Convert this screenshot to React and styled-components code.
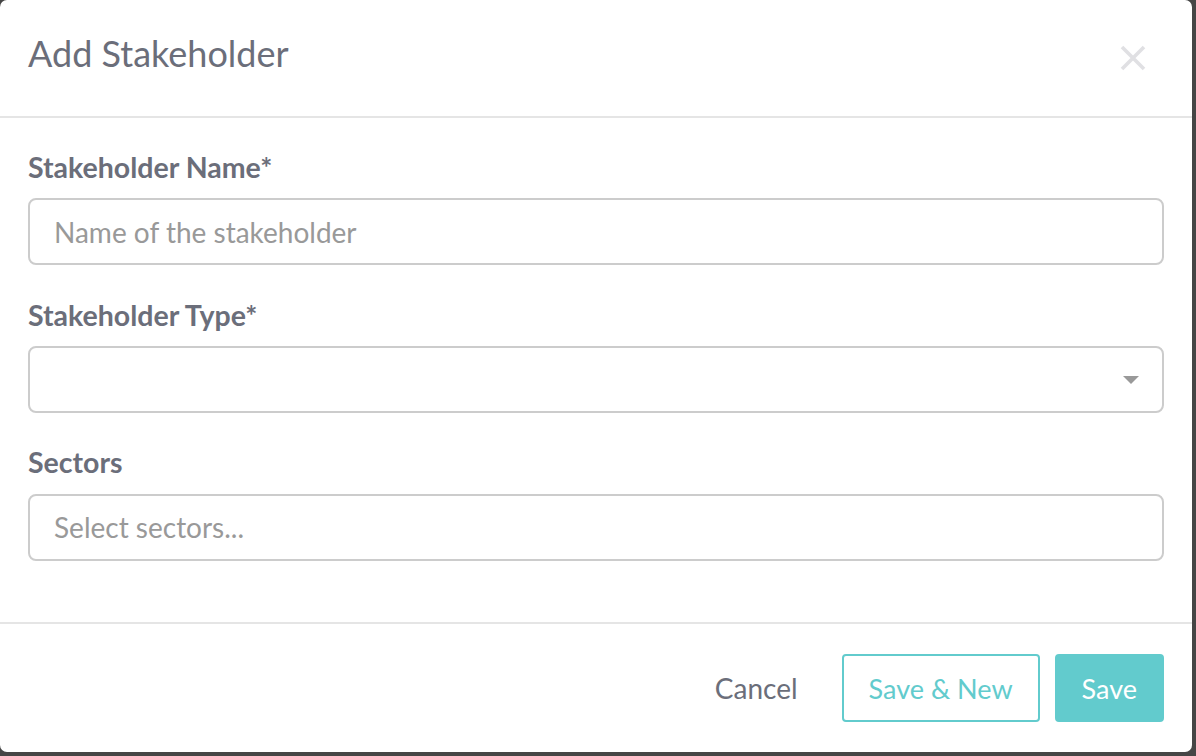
import React from "react";
import styled, { createGlobalStyle } from "styled-components";

const GlobalStyle = createGlobalStyle`
  * {
    box-sizing: border-box;
  }
  body {
    margin: 0;
    font-family: Lato, "Open Sans", sans-serif;
    background-color: #454545;
  }
`;

const Backdrop = styled.div`
  width: 100%;
  height: 100vh;
  background-color: #454545;
`;

const Modal = styled.div`
  width: 1192px;
  height: 752px;
  background-color: #fff;
  border-radius: 7px;
  display: flex;
  flex-direction: column;
`;

const Header = styled.div`
  display: flex;
  flex-shrink: 0;
  justify-content: space-between;
  align-items: flex-start;
  height: 118px;
  padding: 32px 46px 0 28px;
  border-bottom: 2px solid #e5e5e5;
`;

const Title = styled.h4`
  margin: 0;
  font-size: 36px;
  font-weight: 400;
  line-height: 1.2;
  color: #6b6e7a;
`;

const CloseButton = styled.button`
  border: none;
  background: none;
  padding: 0;
  margin-top: 13px;
  cursor: pointer;
  display: flex;
`;

const Body = styled.div`
  padding: 32px 28px 0;
  flex: 1;
`;

const Field = styled.div`
  margin-bottom: 32.5px;
  &:last-child {
    margin-bottom: 0;
  }
`;

const Label = styled.label`
  display: block;
  font-size: 28.5px;
  font-weight: 700;
  line-height: 1.2;
  color: #6b6e7a;
  margin-bottom: 14px;
`;

const Input = styled.input`
  display: block;
  width: 100%;
  height: 67px;
  padding: 0 24px;
  border: 2px solid #cccccc;
  border-radius: 8px;
  font-family: Lato, sans-serif;
  font-size: 28px;
  color: #555;
  outline: none;
  &::placeholder {
    color: #999999;
  }
`;

const SelectBox = styled.div`
  height: 67px;
  border: 2px solid #cccccc;
  border-radius: 8px;
  display: flex;
  align-items: center;
  justify-content: flex-end;
  padding-right: 23px;
`;

const Caret = styled.span`
  width: 0;
  height: 0;
  border-left: 8px solid transparent;
  border-right: 8px solid transparent;
  border-top: 8px solid #999999;
  margin-top: 2px;
`;

const Footer = styled.div`
  display: flex;
  flex-shrink: 0;
  justify-content: flex-end;
  align-items: center;
  gap: 15px;
  padding: 30px 28px 30px;
  border-top: 2px solid #e5e5e5;
`;

const Button = styled.button`
  height: 68px;
  padding: 0 ${(p) => (p.$variant === "link" ? "26px" : "25px")};
  margin-right: ${(p) => (p.$variant === "link" ? "1px" : "0")};
  font-family: Lato, sans-serif;
  font-size: ${(p) => (p.$variant === "link" ? "28px" : "27px")};
  border-radius: 4px;
  cursor: pointer;
  border: 2px solid ${(p) => (p.$variant === "link" ? "transparent" : "#62cbcd")};
  background-color: ${(p) => (p.$variant === "primary" ? "#62cbcd" : "#fff")};
  color: ${(p) =>
    p.$variant === "primary" ? "#fff" : p.$variant === "link" ? "#6b6e7a" : "#62cbcd"};
`;

function App() {
  return (
    <Backdrop>
      <GlobalStyle />
      <Modal>
        <Header>
          <Title>Add Stakeholder</Title>
          <CloseButton aria-label="Close">
            <svg width="26" height="26" viewBox="0 0 26 26">
              <path d="M2 2 L24 24 M24 2 L2 24" stroke="#e0e0e3" strokeWidth="3.6" />
            </svg>
          </CloseButton>
        </Header>
        <Body>
          <Field>
            <Label>Stakeholder Name*</Label>
            <Input placeholder="Name of the stakeholder" />
          </Field>
          <Field>
            <Label>Stakeholder Type*</Label>
            <SelectBox>
              <Caret />
            </SelectBox>
          </Field>
          <Field>
            <Label>Sectors</Label>
            <Input placeholder="Select sectors..." />
          </Field>
        </Body>
        <Footer>
          <Button $variant="link">Cancel</Button>
          <Button>Save &amp; New</Button>
          <Button $variant="primary">Save</Button>
        </Footer>
      </Modal>
    </Backdrop>
  );
}

export default App;
